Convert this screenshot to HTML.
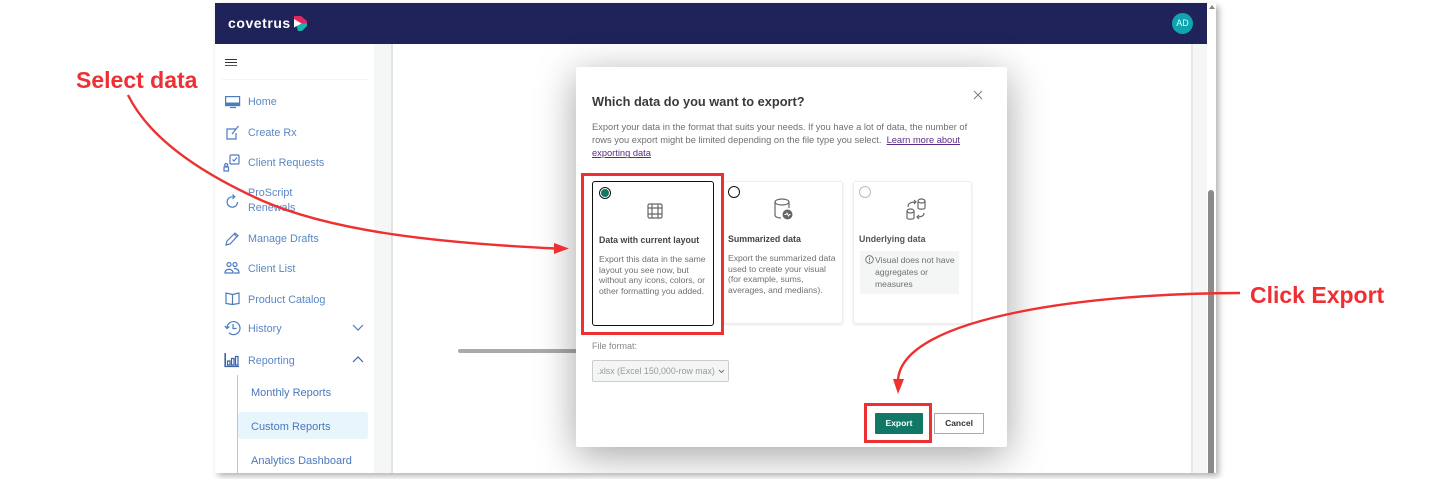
<!DOCTYPE html>
<html><head><meta charset="utf-8">
<style>
html,body{margin:0;padding:0;background:#fff}
body{width:1430px;height:479px;position:relative;overflow:hidden;font-family:"Liberation Sans",sans-serif}
.a{position:absolute;white-space:nowrap}
.n{position:absolute;left:248px;font-size:10.8px;line-height:15px;color:#5a87c6;white-space:nowrap}
.s{position:absolute;left:251px;font-size:11px;line-height:15px;color:#4a78bc;white-space:nowrap}
.d{position:absolute;font-size:8.6px;line-height:11px;color:#707070;white-space:nowrap}
svg{position:absolute;overflow:visible}
.i{fill:none;stroke:#4a7cc0;stroke-width:1.2}
.g{fill:none;stroke:#666;stroke-width:1.2}
</style></head>
<body>
<!-- window -->
<div class="a" style="left:215px;top:3px;width:1001px;height:470px;background:#fff;box-shadow:3px 3px 6px rgba(0,0,0,.3)"></div>
<div class="a" style="left:215px;top:3px;width:992px;height:41px;background:#20235a"></div>
<div class="a" style="left:228px;top:13px;font-size:14px;line-height:20px;font-weight:bold;color:#fff;letter-spacing:.55px">covetrus</div>
<svg style="left:293px;top:15px" width="16" height="16" viewBox="0 0 16 16">
<path d="M1 1H8L14 6V8.500H1Z" fill="#e0285f"/><path d="M3 8.500H14V11L9 16H5Z" fill="#19b3b0"/><path d="M1 4 8.500 8.500 1 12.500Z" fill="#fff"/></svg>
<div class="a" style="left:1172px;top:13px;width:21px;height:21px;border-radius:50%;background:#0ea5b0;color:#dff;font-size:9px;line-height:21px;text-align:center">AD</div>
<!-- scrollbar -->
<div class="a" style="left:1209px;top:5px;width:0;height:0;border-left:3px solid transparent;border-right:3px solid transparent;border-bottom:4px solid #888"></div>
<div class="a" style="left:1208px;top:190px;width:6px;height:283px;background:#8a8a8a;border-radius:3px 3px 0 0"></div>
<!-- gutters -->
<div class="a" style="left:374px;top:44px;width:18px;height:429px;background:#f5f7f7"></div>
<div class="a" style="left:391px;top:44px;width:2px;height:429px;background:#e2e4e4"></div>
<div class="a" style="left:1191px;top:44px;width:16px;height:429px;background:#f5f7f7;border-left:2px solid #e6e8e8;box-sizing:border-box"></div>
<div class="a" style="left:458px;top:349px;width:120px;height:4px;background:#aaa;border-radius:2px"></div>
<!-- sidebar -->
<div class="a" style="left:225px;top:59px;width:12px;height:1px;background:#333;box-shadow:0 3px 0 #333,0 6px 0 #555"></div>
<div class="a" style="left:222px;top:79px;width:146px;height:1px;background:#f4f4f4"></div>
<svg style="left:225px;top:96px" width="16" height="13"><rect x=".6" y=".6" width="14" height="9" class="i"/><rect x=".6" y="6.500" width="14" height="3.500" fill="#4a7cc0"/><path d="M5 11.500H11" class="i"/></svg>
<div class="n" style="top:95px">Home</div>
<svg style="left:225px;top:125px" width="16" height="16"><path d="M11 4H2V14H11V8M7 9 13.500 1" class="i"/></svg>
<div class="n" style="top:126px">Create Rx</div>
<svg style="left:223px;top:154px" width="18" height="18"><rect x="7" y="1" width="9" height="9" rx="1" class="i"/><path d="M9.500 5.500 11 7 14 3.500" class="i"/><rect x="1" y="13" width="4.500" height="4" class="i"/><circle cx="3.200" cy="11" r="1.500" class="i"/></svg>
<div class="n" style="top:156px">Client Requests</div>
<svg style="left:226px;top:193px" width="13" height="15"><path d="M11.500 9A5.200 5.200 0 1 1 6.500 3.800H8.500M6.500 1.500 8.800 3.800 6.500 6" class="i"/></svg>
<div class="n" style="top:186px">ProScript</div>
<div class="n" style="top:201px">Renewals</div>
<svg style="left:225px;top:231px" width="15" height="15"><path d="M1 14 2 10 10 2 13 4.500 5 13Z M9 3 12 6" class="i"/></svg>
<div class="n" style="top:232px">Manage Drafts</div>
<svg style="left:224px;top:261px" width="16" height="14"><circle cx="5" cy="3.500" r="2" class="i"/><circle cx="11" cy="3.500" r="2" class="i"/><path d="M1 12C1 7 9 7 9 12ZM10 7.500C13 7.500 15 9 15 12H10" class="i"/></svg>
<div class="n" style="top:262px">Client List</div>
<svg style="left:225px;top:292px" width="15" height="14"><path d="M7.500 2.500 1 1V11.500L7.500 12.500 14 11.500V1ZM7.500 2.500V13" class="i"/></svg>
<div class="n" style="top:293px">Product Catalog</div>
<svg style="left:224px;top:320px" width="17" height="16"><path d="M3 8A6.500 6.500 0 1 1 5 12.800M.8 6 3 8.500 5.300 6.500M9 4V8.500H12.500" class="i"/></svg>
<div class="n" style="top:322px">History</div>
<svg style="left:352px;top:324px" width="12" height="8"><path d="M1 1 6 6 11 1" class="i"/></svg>
<div class="a" style="left:225px;top:353px;width:1px;height:14px;background:#3a64a8"></div>
<svg style="left:224px;top:353px" width="16" height="15"><path d="M1 0V13.500H15M3.500 12V8H6V12ZM7.500 12V5.500H10V12ZM11.500 12V3.500H14V12Z" fill="none" stroke="#3a64a8" stroke-width="1.200"/></svg>
<div class="n" style="top:354px">Reporting</div>
<svg style="left:352px;top:355px" width="12" height="8"><path d="M1 7 6 2 11 7" fill="none" stroke="#3a64a8" stroke-width="1.200"/></svg>
<div class="a" style="left:237px;top:375px;width:1px;height:98px;background:#c4c4c4"></div>
<div class="s" style="top:386px">Monthly Reports</div>
<div class="a" style="left:238px;top:412px;width:130px;height:27px;background:#e7f5fc;border-radius:3px"></div>
<div class="s" style="top:420px">Custom Reports</div>
<div class="s" style="top:454px">Analytics Dashboard</div>
<!-- dialog -->
<div class="a" style="left:215px;top:3px;width:992px;height:470px;overflow:hidden">
<div class="a" style="left:361px;top:64px;width:431px;height:380px;background:#fff;border-radius:2px;box-shadow:0 8px 40px rgba(0,0,0,.36)"></div>
</div>
<div class="a" style="left:592px;top:93px;font-size:12.800px;line-height:18px;font-weight:bold;color:#3a3a3a">Which data do you want to export?</div>
<svg style="left:973px;top:90px" width="10" height="10"><path d="M1 1 9 9M9 1 1 9" fill="none" stroke="#777" stroke-width=".9"/></svg>
<div class="d" style="left:592px;top:121px;line-height:13.200px;font-size:9.300px">Export your data in the format that suits your needs. If you have a lot of data, the number of<br>rows you export might be limited depending on the file type you select.&nbsp; <span style="color:#5b2a86;text-decoration:underline">Learn more about</span><br><span style="color:#5b2a86;text-decoration:underline">exporting data</span></div>
<!-- cards -->
<div class="a" style="left:592px;top:181px;width:122px;height:145px;box-sizing:border-box;background:#fff;border:1.500px solid #111;border-radius:3px"></div>
<div class="a" style="left:724px;top:181px;width:119px;height:143px;box-sizing:border-box;background:#fff;border:1px solid #eee;border-left:0;border-radius:3px;box-shadow:0 1px 2px rgba(0,0,0,.1)"></div>
<div class="a" style="left:853px;top:181px;width:119px;height:143px;box-sizing:border-box;background:#fff;border:1px solid #eee;border-radius:3px;box-shadow:0 1px 2px rgba(0,0,0,.1)"></div>
<div class="a" style="left:599px;top:187px;width:12px;height:12px;box-sizing:border-box;border:1.500px solid #111;border-radius:50%;background:#fff"></div>
<div class="a" style="left:601px;top:189px;width:8px;height:8px;border-radius:50%;background:#117865"></div>
<div class="a" style="left:728px;top:186px;width:12px;height:12px;box-sizing:border-box;border:1.500px solid #111;border-radius:50%"></div>
<div class="a" style="left:859px;top:186px;width:12px;height:12px;box-sizing:border-box;border:1.300px solid #bbb;border-radius:50%"></div>
<svg style="left:647px;top:203px" width="16" height="16"><rect x="1" y="1" width="14" height="14" rx="1.500" class="g"/><path d="M1 5H15M1 11H15M5 1V15M11 1V15" class="g"/></svg>
<svg style="left:774px;top:198px" width="20" height="22"><path d="M1 4V17C1 19 4 20 7 20M15 4V10" class="g"/><ellipse cx="8" cy="4" rx="7" ry="3" class="g"/><circle cx="13.500" cy="16.500" r="5" fill="#666"/><path d="M10.500 16.500H12L13 15 14.500 18 15.500 16.500H16.500" fill="none" stroke="#fff" stroke-width=".9"/></svg>
<svg style="left:905px;top:198px" width="22" height="23"><ellipse cx="16.500" cy="3" rx="3.500" ry="2" class="g"/><path d="M13 3V10C13 11.500 20 11.500 20 10V3M2 13V20C2 21.500 9 21.500 9 20V13" class="g"/><ellipse cx="5.500" cy="13" rx="3.500" ry="2" class="g"/><path d="M3 9C3 5 6 4 11 4M9 2 11 4 9 6M19 15C19 18 16 19 12 19M14 17 12 19 14 21" class="g"/></svg>
<div class="a" style="left:599px;top:234px;font-size:8.800px;line-height:12px;font-weight:bold;color:#444">Data with current layout</div>
<div class="a" style="left:728px;top:233px;font-size:8.800px;line-height:12px;font-weight:bold;color:#444">Summarized data</div>
<div class="a" style="left:859px;top:233px;font-size:8.800px;line-height:12px;font-weight:bold;color:#555">Underlying data</div>
<div class="d" style="left:599px;top:254px;line-height:10.700px">Export this data in the same<br>layout you see now, but<br>without any icons, colors, or<br>other formatting you added.</div>
<div class="d" style="left:728px;top:253px;line-height:10.700px">Export the summarized data<br>used to create your visual<br>(for example, sums,<br>averages, and medians).</div>
<div class="a" style="left:860px;top:251px;width:99px;height:43px;background:#f4f6f5"></div>
<svg style="left:865px;top:255px" width="9" height="9"><circle cx="4.500" cy="4.500" r="3.800" fill="none" stroke="#666" stroke-width=".8"/><path d="M4.500 2.500V5.500M4.500 6V7" stroke="#666" stroke-width=".8"/></svg>
<div class="d" style="left:875px;top:254px;line-height:12.200px">Visual does not have<br>aggregates or<br>measures</div>
<div class="d" style="left:592px;top:341px;color:#888;font-size:9px">File format:</div>
<div class="a" style="left:592px;top:360px;width:137px;height:22px;box-sizing:border-box;background:#f4f6f5;border:1px solid #ccc;border-radius:2px;font-size:8.800px;line-height:20px;color:#999;padding-left:4px">.xlsx (Excel 150,000-row max)</div>
<svg style="left:718px;top:369px" width="7" height="5"><path d="M1 1 3.500 3.500 6 1" fill="none" stroke="#777"/></svg>
<div class="a" style="left:875px;top:413px;width:48px;height:21px;background:#117865;color:#fff;font-size:8.500px;font-weight:bold;line-height:21px;text-align:center;border-radius:1px">Export</div>
<div class="a" style="left:934px;top:413px;width:50px;height:21px;box-sizing:border-box;background:#fff;border:1px solid #aaa;color:#333;font-size:8.500px;font-weight:bold;line-height:19px;text-align:center">Cancel</div>
<!-- annotations -->
<div class="a" style="left:581px;top:173px;width:143px;height:162px;box-sizing:border-box;border:3px solid #ee3030"></div>
<div class="a" style="left:864px;top:403px;width:68px;height:40px;box-sizing:border-box;border:3px solid #ee3030"></div>
<svg style="left:0;top:0" width="1430" height="479">
<path d="M128 95C150 140 205 175 263 201C335 232 440 243 556 248.500" fill="none" stroke="#ee3030" stroke-width="2.400"/>
<path d="M554 243 569 248.500 554 254Z" fill="#ee3030"/>
<path d="M1240 293C1100 293 900 315 898 381" fill="none" stroke="#ee3030" stroke-width="2.400"/>
<path d="M893 379 904 379 898 394Z" fill="#ee3030"/>
</svg>
<div class="a" style="left:76px;top:67px;font-size:23px;line-height:26px;font-weight:bold;color:#ee3035">Select data</div>
<div class="a" style="left:1250px;top:282px;font-size:23px;line-height:26px;font-weight:bold;color:#ee3035">Click Export</div>
</body></html>
